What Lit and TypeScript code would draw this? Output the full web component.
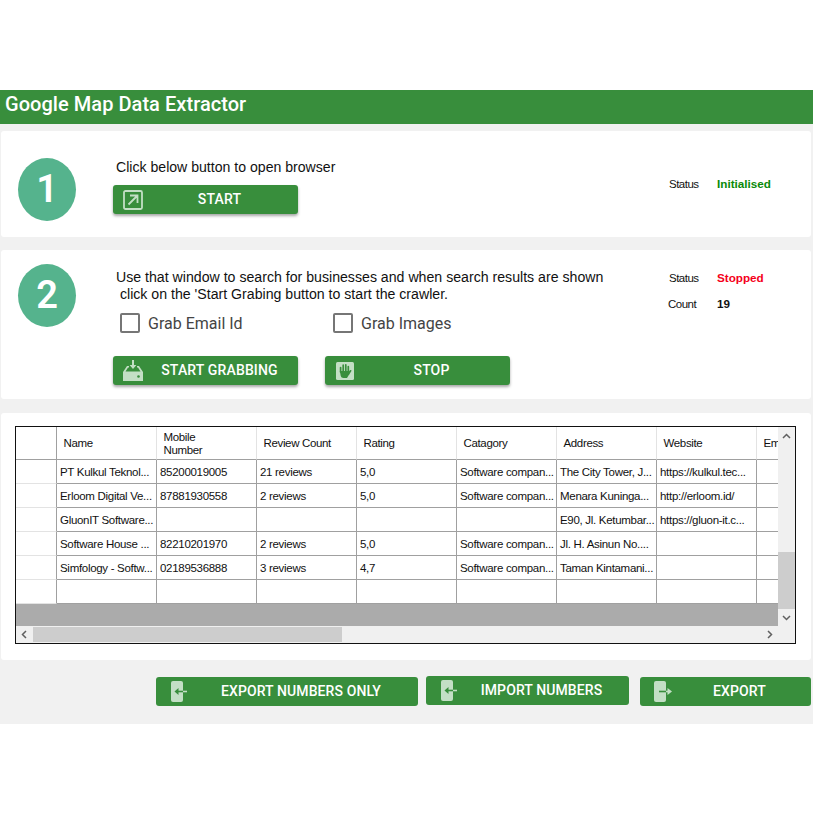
import { LitElement, html, css, svg } from "lit";
import { customElement } from "lit/decorators.js";

const ICONS: Record<string, unknown> = {
  open: svg`<svg class="ic" width="20" height="20" viewBox="0 0 20 20" fill="none" stroke="#c3dfc5" stroke-width="1.8"><rect x="1" y="1" width="18" height="18" rx="1.5"/><path d="M5.500 14.500L14 6M7 5.500H14.500V13"/></svg>`,
  grab: svg`<svg class="ic" width="20" height="22" viewBox="0 0 20 22"><path fill="#c3dfc5" d="M9 0h2v5h2.400L10 9 6.600 5H9zM4 6h2v1.500H5L2.500 11.500h15L15 7.500h-1V6h2l4 6v9H0v-9z"/><circle cx="15.500" cy="16.500" r="1.300" fill="#388e3c"/></svg>`,
  stop: svg`<svg class="ic" width="18" height="18" viewBox="0 0 18 18"><rect width="18" height="18" rx="1.500" fill="#c3dfc5"/><g fill="none" stroke="#388e3c" stroke-width="1.700" stroke-linecap="round"><path d="M4.600 10V5.500M7.200 9V3.200M9.800 9V2.800M12.300 9.500V4.500M12.500 12L14.600 8.800"/></g><path fill="#388e3c" d="M3.800 9h9.300v3.500L11 16H7.500c-1.500 0-2.300-.8-2.800-2.200z"/></svg>`,
  out: svg`<svg class="ic" width="16" height="21" viewBox="0 0 16 21"><rect x="0" y="0" width="12" height="21" rx="2" fill="#c3dfc5"/><path fill="none" stroke="#388e3c" stroke-width="1.600" d="M5 10.500H12"/><path fill="none" stroke="#c3dfc5" stroke-width="1.600" d="M12 10.500H16"/><path fill="#388e3c" d="M3.500 10.500L7.500 7v7z"/></svg>`,
  exp: svg`<svg class="ic" width="18" height="21" viewBox="0 0 18 21"><rect x="0" y="0" width="12" height="21" rx="2" fill="#c3dfc5"/><path fill="none" stroke="#388e3c" stroke-width="1.600" d="M5 10.500H12"/><path fill="none" stroke="#c3dfc5" stroke-width="1.600" d="M12 10.500H15"/><path fill="#c3dfc5" d="M18 10.500L13.500 7v7z"/></svg>`,
};

const HEAD = ["Name", "Mobile\nNumber", "Review Count", "Rating", "Catagory", "Address", "Website", "Em"];
const ROWS = [
  ["PT Kulkul Teknol...", "85200019005", "21 reviews", "5,0", "Software compan...", "The City Tower, J...", "https://kulkul.tec...", ""],
  ["Erloom Digital Ve...", "87881930558", "2 reviews", "5,0", "Software compan...", "Menara Kuninga...", "http://erloom.id/", ""],
  ["GluonIT Software...", "", "", "", "", "E90, Jl. Ketumbar...", "https://gluon-it.c...", ""],
  ["Software House ...", "82210201970", "2 reviews", "5,0", "Software compan...", "Jl. H. Asinun No....", "", ""],
  ["Simfology - Softw...", "02189536888", "3 reviews", "4,7", "Software compan...", "Taman Kintamani...", "", ""],
  ["", "", "", "", "", "", "", ""],
];

@customElement("app-root")
export class AppRoot extends LitElement {
  static styles = css`
    :host { display: block; width: 813px; height: 813px; background: #fff; padding-top: 90px; box-sizing: border-box; font-family: "Liberation Sans", Arial, sans-serif; color: #111; overflow: hidden; }
    .title { height: 34px; background: #388e3c; color: #fff; font: 500 20px/29px Roboto, sans-serif; letter-spacing: .05px; padding-left: 5px; box-sizing: border-box; }
    .body { background: #f1f1f1; height: 600px; padding: 7px 2px 0 1px; box-sizing: border-box; }
    .card { background: #fff; border-radius: 3px; box-sizing: border-box; }
    .c1 { height: 106px; display: grid; grid-template-columns: 95px 556px auto; padding: 27px 0 0 17px; }
    .c2 { height: 149px; margin-top: 13px; display: grid; grid-template-columns: 95px 556px auto; padding: 14px 0 0 17px; }
    .c3 { height: 247px; margin-top: 14px; padding: 13px 0 0 14px; }
    .circle { width: 58px; height: 63px; border-radius: 50%; background: #55b38d; color: #fff; font: 600 38px/63px Roboto, sans-serif; text-align: center; }
    .mid { font-size: 14.150px; line-height: 17px; min-width: 0; }
    .msg1 { padding: 1px 0 0 3px; margin-bottom: 9px; height: 17px; font-size: 14.100px; }
    .msg2 { padding: 5px 0 0 3px; white-space: pre; }
    .btn { width: 185px; height: 29px; border-radius: 3px; background: #388e3c; color: #fff; font: 500 14px/29px Roboto, sans-serif; letter-spacing: .15px; text-align: center; display: flex; align-items: center; box-sizing: border-box; }
    .shadow { box-shadow: 0 2px 3px rgba(0,0,0,.35); }
    .ic { flex: none; }
    .icbox { width: 40px; flex: none; display: flex; justify-content: center; box-sizing: border-box; }
    .lbl { flex: 1; white-space: nowrap; padding-right: 12px; }
    .checks { display: flex; margin-top: 10px; padding-left: 7px; height: 20px; }
    .chk { display: flex; align-items: center; width: 213px; font: 400 16px/20px Roboto, sans-serif; color: #444; gap: 8px; }
    .chk .t { padding-top: 2px; }
    .box { width: 16px; height: 16px; border: 2px solid #767676; border-radius: 2px; background: #fff; }
    .btns { display: flex; gap: 27px; margin-top: 23px; }
    .stat { display: grid; grid-template-columns: 48px auto; row-gap: 9px; font-size: 11.500px; letter-spacing: -.5px; line-height: 17px; align-content: start; }
    .c1 .stat { padding-top: 18px; }
    .c2 .stat { padding-top: 6px; }
    .v { font-weight: 700; font-size: 11.700px; letter-spacing: 0; line-height: 15px; }
    .green { color: #0a8a0a; } .red { color: #f5001a; }
    .count { margin-left: -1px; }
    .table { width: 781px; height: 218px; border: 1.500px solid #111; box-sizing: border-box; background: #ababab; overflow: hidden; display: grid; grid-template-columns: 1fr 17px; grid-template-rows: 1fr 17px; }
    .view { overflow: hidden; font-size: 11.500px; letter-spacing: -.3px; min-width: 0; }
    .grid { display: grid; grid-template-columns: 40.500px repeat(8, 100px); grid-template-rows: 33px repeat(6, 24px); width: 841px; }
    .cell { background: #fff; border-right: 1px solid #a0a0a0; border-bottom: 1px solid #a0a0a0; box-sizing: border-box; padding: 1px 0 0 3.500px; line-height: 23px; white-space: nowrap; overflow: hidden; }
    .hd { border-right-color: #e3e3e3; letter-spacing: -.35px; line-height: 13px; padding: 1px 0 0 7px; display: flex; align-items: center; white-space: pre; }
    .rh { border-bottom-color: #e3e3e3; }
    .hd.first { border-right-color: #a0a0a0; }
    .sb { background: #f0f0f0; display: flex; }
    .v-sb { flex-direction: column; grid-row: 1; grid-column: 2; }
    .h-sb { grid-row: 2; grid-column: 1 / 3; align-items: center; }
    .thumb { background: #cdcdcd; }
    .v-sb .thumb { height: 57px; margin-top: 107px; }
    .h-sb .thumb { width: 309px; height: 15px; }
    .arr { flex: none; width: 17px; height: 17px; display: flex; align-items: center; justify-content: center; }
    .v-sb .arr.top { height: 18px; }
    .h-sb .arr.end { margin-right: 17px; }
    .spacer { flex: 1; }
    .foot { display: flex; align-items: flex-start; margin-top: 16px; padding-left: 155px; }
    .foot .btn { margin-top: 1px; letter-spacing: .1px; }
    .foot .b1 { width: 262px; }
    .foot .b2 { width: 203px; margin: 0 11px 0 8px; }
    .foot .b3 { width: 171px; }
    .foot .icbox { width: 46px; }
    .foot .lbl { padding-right: 18px; }
  `;

  private arrow(d: string) {
    return svg`<svg width="9" height="9" viewBox="0 0 9 9" fill="none" stroke="#606060" stroke-width="1.500"><path d="${d}"/></svg>`;
  }

  private btn(icon: string, label: string, cls = "shadow") {
    return html`<div class="btn ${cls}"><span class="icbox">${ICONS[icon]}</span><span class="lbl">${label}</span></div>`;
  }

  render() {
    return html`
      <div class="title">Google Map Data Extractor</div>
      <div class="body">
        <div class="card c1">
          <div class="circle">1</div>
          <div class="mid">
            <div class="msg1">Click below button to open browser</div>
            ${this.btn("open", "START")}
          </div>
          <div class="stat"><span>Status</span><span class="v green">Initialised</span></div>
        </div>
        <div class="card c2">
          <div class="circle">2</div>
          <div class="mid">
            <div class="msg2">Use that window to search for businesses and when search results are shown
 click on the 'Start Grabing button to start the crawler.</div>
            <div class="checks">
              <label class="chk"><span class="box"></span><span class="t">Grab Email Id</span></label>
              <label class="chk"><span class="box"></span><span class="t">Grab Images</span></label>
            </div>
            <div class="btns">${this.btn("grab", "START GRABBING")}${this.btn("stop", "STOP")}</div>
          </div>
          <div class="stat"><span>Status</span><span class="v red">Stopped</span><span class="count">Count</span><span class="v">19</span></div>
        </div>
        <div class="card c3">
          <div class="table">
            <div class="view"><div class="grid">
              <div class="cell hd first"></div>
              ${HEAD.map((h) => html`<div class="cell hd">${h}</div>`)}
              ${ROWS.map((r) => html`<div class="cell rh"></div>${r.map((c) => html`<div class="cell">${c}</div>`)}`)}
            </div></div>
            <div class="sb v-sb">
              <span class="arr top">${this.arrow("M1 6L4.500 2.500L8 6")}</span>
              <div class="thumb"></div>
              <span class="spacer"></span>
              <span class="arr">${this.arrow("M1 3L4.500 6.500L8 3")}</span>
            </div>
            <div class="sb h-sb">
              <span class="arr">${this.arrow("M6 1L2.500 4.500L6 8")}</span>
              <div class="thumb"></div>
              <span class="spacer"></span>
              <span class="arr end">${this.arrow("M3 1L6.500 4.500L3 8")}</span>
            </div>
          </div>
        </div>
        <div class="foot">
          ${this.btn("out", "EXPORT NUMBERS ONLY", "b1")}
          ${this.btn("out", "IMPORT NUMBERS", "b2")}
          ${this.btn("exp", "EXPORT", "b3")}
        </div>
      </div>
    `;
  }
}
